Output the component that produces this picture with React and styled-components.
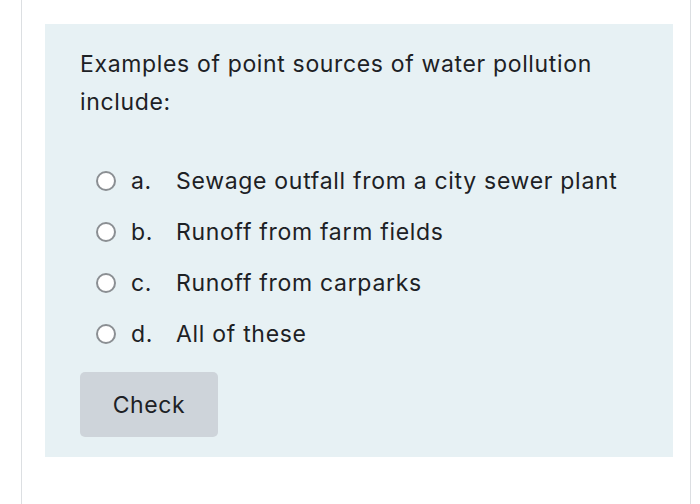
import React from "react";
import styled, { createGlobalStyle } from "styled-components";

const Global = createGlobalStyle`
  html, body { margin: 0; padding: 0; background: #fff; }
  body { font-family: Inter, "Liberation Sans", Arial, sans-serif; color: #1d2125; }
`;

const Page = styled.div`
  width: 700px;
  height: 504px;
  box-sizing: border-box;
  padding: 0 9px 0 21px;
  overflow: hidden;
`;

const Card = styled.div`
  height: 100%;
  box-sizing: border-box;
  border-left: 1px solid #dcdfe2;
  border-right: 1px solid #dcdfe2;
  padding: 24px 17px 0 23px;
`;

const Panel = styled.div`
  background: #e7f1f4;
  padding: 21px 35px 21px 35px;
  height: 433px;
  box-sizing: border-box;
`;

const Question = styled.div`
  font-size: 23px;
  letter-spacing: 0.65px;
  line-height: 38px;
  margin: 0 0 34px 0;
`;

const Options = styled.div`
  display: flex;
  flex-direction: column;
  padding-left: 16px;
`;

const Option = styled.label`
  display: flex;
  align-items: center;
  height: 51px;
  font-size: 23px;
  letter-spacing: 0.7px;
`;

const Radio = styled.span`
  width: 16px;
  height: 16px;
  border: 2px solid #8b8f93;
  border-radius: 50%;
  background: #fff;
  flex: none;
  margin-right: 15px;
`;

const Letter = styled.span`
  width: 45px;
  flex: none;
`;

const Button = styled.button`
  margin-top: 13px;
  width: 138px;
  height: 65px;
  border: none;
  border-radius: 5px;
  background: #ced4da;
  color: #1d2125;
  font-family: inherit;
  font-size: 23px;
  letter-spacing: 0.6px;
  padding: 0;
`;

const options = [
  ["a.", "Sewage outfall from a city sewer plant"],
  ["b.", "Runoff from farm fields"],
  ["c.", "Runoff from carparks"],
  ["d.", "All of these"],
];

export default function App() {
  return (
    <>
      <Global />
      <Page>
        <Card>
          <Panel>
            <Question>Examples of point sources of water pollution include:</Question>
            <Options>
              {options.map(([l, t]) => (
                <Option key={l}>
                  <Radio />
                  <Letter>{l}</Letter>
                  <span>{t}</span>
                </Option>
              ))}
            </Options>
            <Button>Check</Button>
          </Panel>
        </Card>
      </Page>
    </>
  );
}
